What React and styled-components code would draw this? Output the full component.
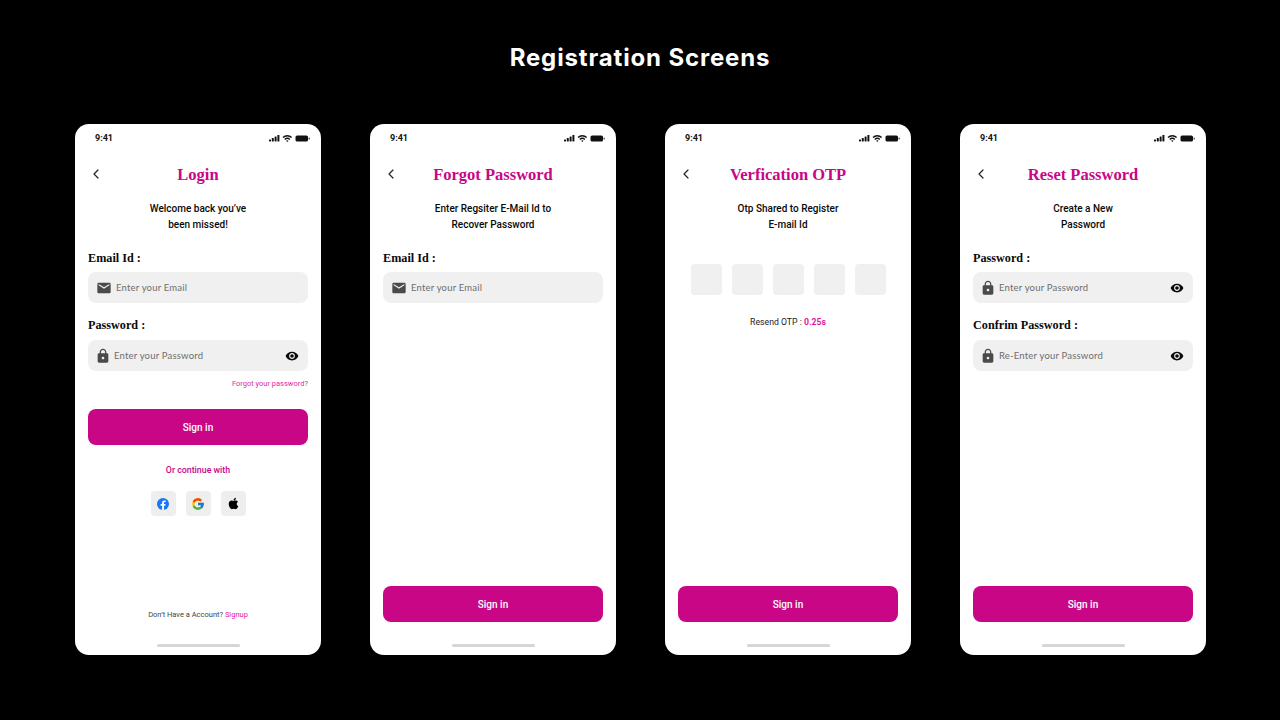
import React from 'react';
import styled, { createGlobalStyle } from 'styled-components';
import { ChevronLeft } from 'lucide-react';
import { FaApple } from 'react-icons/fa';
import { FcGoogle } from 'react-icons/fc';
import { MdEmail, MdLock, MdVisibility } from 'react-icons/md';

const PINK = '#c80686';

const Global = createGlobalStyle`
  html, body { margin: 0; padding: 0; background: #000; }
  body { font-family: "Roboto", "Liberation Sans", sans-serif; }
`;

const Page = styled.main`
  width: 1280px;
  height: 720px;
  background: #000;
  overflow: hidden;
  display: flex;
  flex-direction: column;
  align-items: center;
`;

const PageTitle = styled.h1`
  margin: 42px 0 0;
  height: 32px;
  line-height: 32px;
  font-family: "Inter", "Liberation Sans", sans-serif;
  font-size: 24px;
  font-weight: 700;
  letter-spacing: 0.85px;
  color: #fff;
`;

const Row = styled.div`
  margin: 50px 0 0 1px;
  display: flex;
  gap: 49px;
`;

const Phone = styled.section`
  width: 246px;
  height: 531px;
  box-sizing: border-box;
  padding: 0 13px;
  background: #fff;
  border-radius: 14px;
  display: flex;
  flex-direction: column;
`;

const StatusBar = styled.div`
  height: 28px;
  margin: 0 -2px 0 7px;
  display: flex;
  align-items: center;
  justify-content: space-between;
  font-size: 9px;
  font-weight: 700;
  color: #111;
`;

const Header = styled.header`
  position: relative;
  margin-top: 9px;
  height: 28px;
  display: flex;
  align-items: center;
  justify-content: center;
`;

const Back = styled.span`
  position: absolute;
  left: 0;
  top: 5px;
  display: flex;
  color: #1c2434;
`;

const Title = styled.h2`
  margin: 0;
  font-family: "Liberation Serif", serif;
  font-size: 16.5px;
  font-weight: 700;
  color: ${PINK};
`;

const Subtitle = styled.p`
  margin: 12px 0 0;
  text-align: center;
  font-size: 10px;
  font-weight: 500;
  line-height: 16px;
  color: #0a0a0a;
`;

const Label = styled.label`
  display: block;
  margin: ${(p) => (p.$first ? '17px 0 6px' : '14px 0 7px')};
  height: 16px;
  line-height: 16px;
  font-family: "Liberation Serif", serif;
  font-size: 12.2px;
  font-weight: 700;
  color: #0a0a0a;
`;

const InputBox = styled.div`
  height: 31px;
  box-sizing: border-box;
  padding: 0 9px 0 ${(p) => p.$pad}px;
  background: #f0f0f0;
  border-radius: 8px;
  display: flex;
  align-items: center;
  gap: ${(p) => p.$gap}px;
  color: #4a4a4a;
`;

const Placeholder = styled.span`
  flex: 1;
  font-family: "Lato", sans-serif;
  font-size: 9.5px;
  letter-spacing: 0.2px;
  color: #6e6e6e;
`;

const Eye = styled.span`
  display: flex;
  color: #0a0a0a;
`;

const Forgot = styled.a`
  align-self: flex-end;
  margin-top: 8px;
  height: 10px;
  line-height: 10px;
  font-size: 7.5px;
  color: #d92ba6;
`;

const Button = styled.button`
  display: block;
  width: 100%;
  height: 36px;
  flex: none;
  margin-top: ${(p) => (p.$bottom ? 'auto' : '20px')};
  margin-bottom: ${(p) => (p.$bottom ? '22px' : '0')};
  border: 0;
  border-radius: 8px;
  background: ${PINK};
  color: #fff;
  font-family: inherit;
  font-size: 10px;
  font-weight: 500;
`;

const Continue = styled.div`
  margin-top: 19px;
  text-align: center;
  font-size: 8.8px;
  font-weight: 500;
  line-height: 12px;
  color: ${PINK};
`;

const Socials = styled.div`
  margin-top: 15px;
  display: flex;
  justify-content: center;
  gap: 10px;
`;

const Social = styled.span`
  width: 25px;
  height: 25px;
  border-radius: 4px;
  background: #eeeeee;
  display: flex;
  align-items: center;
  justify-content: center;
`;

const Signup = styled.div`
  margin-top: auto;
  margin-bottom: 24px;
  text-align: center;
  font-size: 7.5px;
  line-height: 10px;
  color: #444;
  span { color: #e020a8; }
`;

const HomeBar = styled.div`
  flex: none;
  align-self: center;
  width: 83px;
  height: 3px;
  margin-bottom: 8px;
  border-radius: 2px;
  background: #d6d6d6;
`;

const OtpRow = styled.div`
  margin-top: 31px;
  display: flex;
  justify-content: center;
  gap: 10px;
`;

const OtpCell = styled.div`
  width: 31px;
  height: 31px;
  border-radius: 4px;
  background: #f0f0f0;
`;

const Resend = styled.div`
  margin-top: 22px;
  text-align: center;
  font-size: 8.7px;
  line-height: 11px;
  color: #222;
  b { color: #e0189c; font-weight: 700; }
`;

const StatusIcons = () => (
  <svg width="41" height="9" viewBox="0 0 41 9" fill="#111">
    <rect x="0" y="5.5" width="2" height="2" rx="0.4" />
    <rect x="2.8" y="4" width="2" height="3.5" rx="0.4" />
    <rect x="5.6" y="2.5" width="2" height="5" rx="0.4" />
    <rect x="8.4" y="1" width="2" height="6.5" rx="0.4" />
    <path d="M13.5 3a7 7 0 0 1 9.6 0l-1 1.1a5.5 5.5 0 0 0-7.6 0zM15.3 5a4.4 4.4 0 0 1 6 0l-1 1a3 3 0 0 0-4 0zM17.1 6.8a1.8 1.8 0 0 1 2.4 0l-1.2 1.3z" />
    <rect x="26.5" y="1.5" width="12.5" height="6" rx="1.6" />
    <rect x="39.6" y="3.4" width="1" height="2.2" rx="0.5" />
  </svg>
);

const Facebook = () => (
  <svg width="12" height="12" viewBox="0 0 24 24">
    <circle cx="12" cy="12" r="12" fill="#1877f2" />
    <path fill="#fff" d="M16.7 15.5l.5-3.5h-3.3V9.8c0-1 .5-1.9 2-1.9h1.5V5c0 0-1.4-.2-2.7-.2-2.7 0-4.5 1.6-4.5 4.6V12h-3v3.5h3V24h3.7v-8.5z" />
  </svg>
);

const Top = ({ title }) => (
  <>
    <StatusBar>
      <span>9:41</span>
      <StatusIcons />
    </StatusBar>
    <Header>
      <Back><ChevronLeft size={16} strokeWidth={1.8} /></Back>
      <Title>{title}</Title>
    </Header>
  </>
);

const EmailField = () => (
  <InputBox $pad={8} $gap={4}>
    <MdEmail size={16} />
    <Placeholder>Enter your Email</Placeholder>
  </InputBox>
);

const PasswordField = ({ text }) => (
  <InputBox $pad={7} $gap={3}>
    <MdLock size={16} />
    <Placeholder>{text}</Placeholder>
    <Eye><MdVisibility size={14} /></Eye>
  </InputBox>
);

export default function App() {
  return (
    <Page>
      <Global />
      <PageTitle>Registration Screens</PageTitle>
      <Row>
        <Phone>
          <Top title="Login" />
          <Subtitle>Welcome back you’ve<br />been missed!</Subtitle>
          <Label $first>Email Id :</Label>
          <EmailField />
          <Label>Password :</Label>
          <PasswordField text="Enter your Password" />
          <Forgot>Forgot your password?</Forgot>
          <Button>Sign in</Button>
          <Continue>Or continue with</Continue>
          <Socials>
            <Social><Facebook /></Social>
            <Social><FcGoogle size={14} /></Social>
            <Social><FaApple size={13} color="#000" /></Social>
          </Socials>
          <Signup>Don’t Have a Account? <span>Signup</span></Signup>
          <HomeBar />
        </Phone>

        <Phone>
          <Top title="Forgot Password" />
          <Subtitle>Enter Regsiter E-Mail Id to<br />Recover Password</Subtitle>
          <Label $first>Email Id :</Label>
          <EmailField />
          <Button $bottom>Sign in</Button>
          <HomeBar />
        </Phone>

        <Phone>
          <Top title="Verfication OTP" />
          <Subtitle>Otp Shared to Register<br />E-mail Id</Subtitle>
          <OtpRow>
            {[0, 1, 2, 3, 4].map((n) => <OtpCell key={n} />)}
          </OtpRow>
          <Resend>Resend OTP : <b>0.25s</b></Resend>
          <Button $bottom>Sign in</Button>
          <HomeBar />
        </Phone>

        <Phone>
          <Top title="Reset Password" />
          <Subtitle>Create a New<br />Password</Subtitle>
          <Label $first>Password :</Label>
          <PasswordField text="Enter your Password" />
          <Label>Confrim Password :</Label>
          <PasswordField text="Re-Enter your Password" />
          <Button $bottom>Sign in</Button>
          <HomeBar />
        </Phone>
      </Row>
    </Page>
  );
}
